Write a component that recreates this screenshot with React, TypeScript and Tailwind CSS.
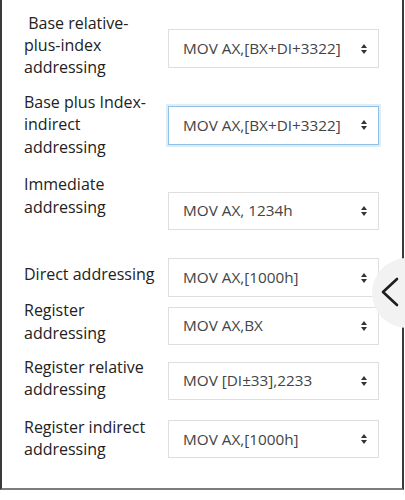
import React from "react";

type Row = {
  lines: string[];
  value: string;
  rowClass: string;
  labelClass: string;
  selectClass: string;
  focused?: boolean;
};

const rows: Row[] = [
  {
    lines: ["\u00a0Base relative-", "plus-index", "addressing"],
    value: "MOV AX,[BX+DI+3322]",
    rowClass: "mt-0",
    labelClass: "pt-0",
    selectClass: "mt-[17.7px]",
  },
  {
    lines: ["Base plus Index-", "indirect", "addressing"],
    value: "MOV AX,[BX+DI+3322]",
    rowClass: "mt-[12.1px]",
    labelClass: "pt-0",
    selectClass: "mt-[15.1px]",
    focused: true,
  },
  {
    lines: ["Immediate", "addressing"],
    value: "MOV AX, 1234h",
    rowClass: "mt-[15.2px]",
    labelClass: "pt-0",
    selectClass: "mt-[18.4px]",
  },
  {
    lines: ["Direct addressing"],
    value: "MOV AX,[1000h]",
    rowClass: "mt-[28.1px]",
    labelClass: "pt-[4.3px]",
    selectClass: "mt-0",
  },
  {
    lines: ["Register", "addressing"],
    value: "MOV AX,BX",
    rowClass: "mt-[2.5px]",
    labelClass: "pt-0",
    selectClass: "mt-[7.4px]",
  },
  {
    lines: ["Register relative", "addressing"],
    value: "MOV [DI±33],2233",
    rowClass: "mt-[10.7px]",
    labelClass: "pt-0",
    selectClass: "mt-[5.8px]",
  },
  {
    lines: ["Register indirect", "addressing"],
    value: "MOV AX,[1000h]",
    rowClass: "mt-[15.2px]",
    labelClass: "pt-0",
    selectClass: "mt-[4.1px]",
  },
];

function SortArrows() {
  return (
    <svg width="6" height="10" viewBox="0 0 6 10" className="pointer-events-none absolute right-[12.5px] top-1/2 -translate-y-1/2">
      <polygon points="0,4 3,0 6,4" fill="#333" />
      <polygon points="0,6 3,10 6,6" fill="#333" />
    </svg>
  );
}

function FieldRow({ row }: { row: Row }) {
  return (
    <div className={`flex items-start ${row.rowClass}`}>
      <label className={`w-[144px] shrink-0 text-[16px] font-medium leading-[22.4px] text-[#222] ${row.labelClass}`}>
        {row.lines.map((line, i) => (
          <span key={i} className="block whitespace-nowrap">
            {line}
          </span>
        ))}
      </label>
      <div className={`relative w-[211px] ${row.selectClass}`}>
        <select
          defaultValue={row.value}
          className={
            row.focused
              ? "h-[38.5px] w-full appearance-none rounded-none border border-[#8fc1e6] bg-white pl-[14px] pr-[20px] text-[15.3px] text-[#444] shadow-[0_0_0_2px_rgba(150,195,230,0.3)] outline-none"
              : "h-[38.5px] w-full appearance-none rounded-none border border-[#dedede] bg-white pl-[14px] pr-[20px] text-[15.3px] text-[#444] outline-none"
          }
        >
          <option value={row.value}>{row.value}</option>
        </select>
        <SortArrows />
      </div>
    </div>
  );
}

export default function App() {
  return (
    <div className="min-h-[500px] w-[405px] overflow-hidden bg-white font-['Open_Sans','Noto_Sans',sans-serif]">
      <div className="relative w-[404px] border-x-2 border-b-2 border-l-[#3a3a3a] border-r-[#3a3a3a] border-b-[#7c7c7c] bg-white pb-[27px] pl-[22px] pt-[11.6px]">
        {rows.map((row, i) => (
          <FieldRow key={i} row={row} />
        ))}

        <button className="absolute left-[370px] top-[258px] h-[70px] w-[70px] rounded-full bg-[#f2f2f2]">
          <svg width="70" height="70" viewBox="0 0 70 70" className="absolute left-0 top-0">
            <polyline points="25,21 11,34 25,47" fill="none" stroke="#1e1e1e" strokeWidth="2.6" strokeLinecap="round" strokeLinejoin="round" />
          </svg>
        </button>
      </div>
    </div>
  );
}
